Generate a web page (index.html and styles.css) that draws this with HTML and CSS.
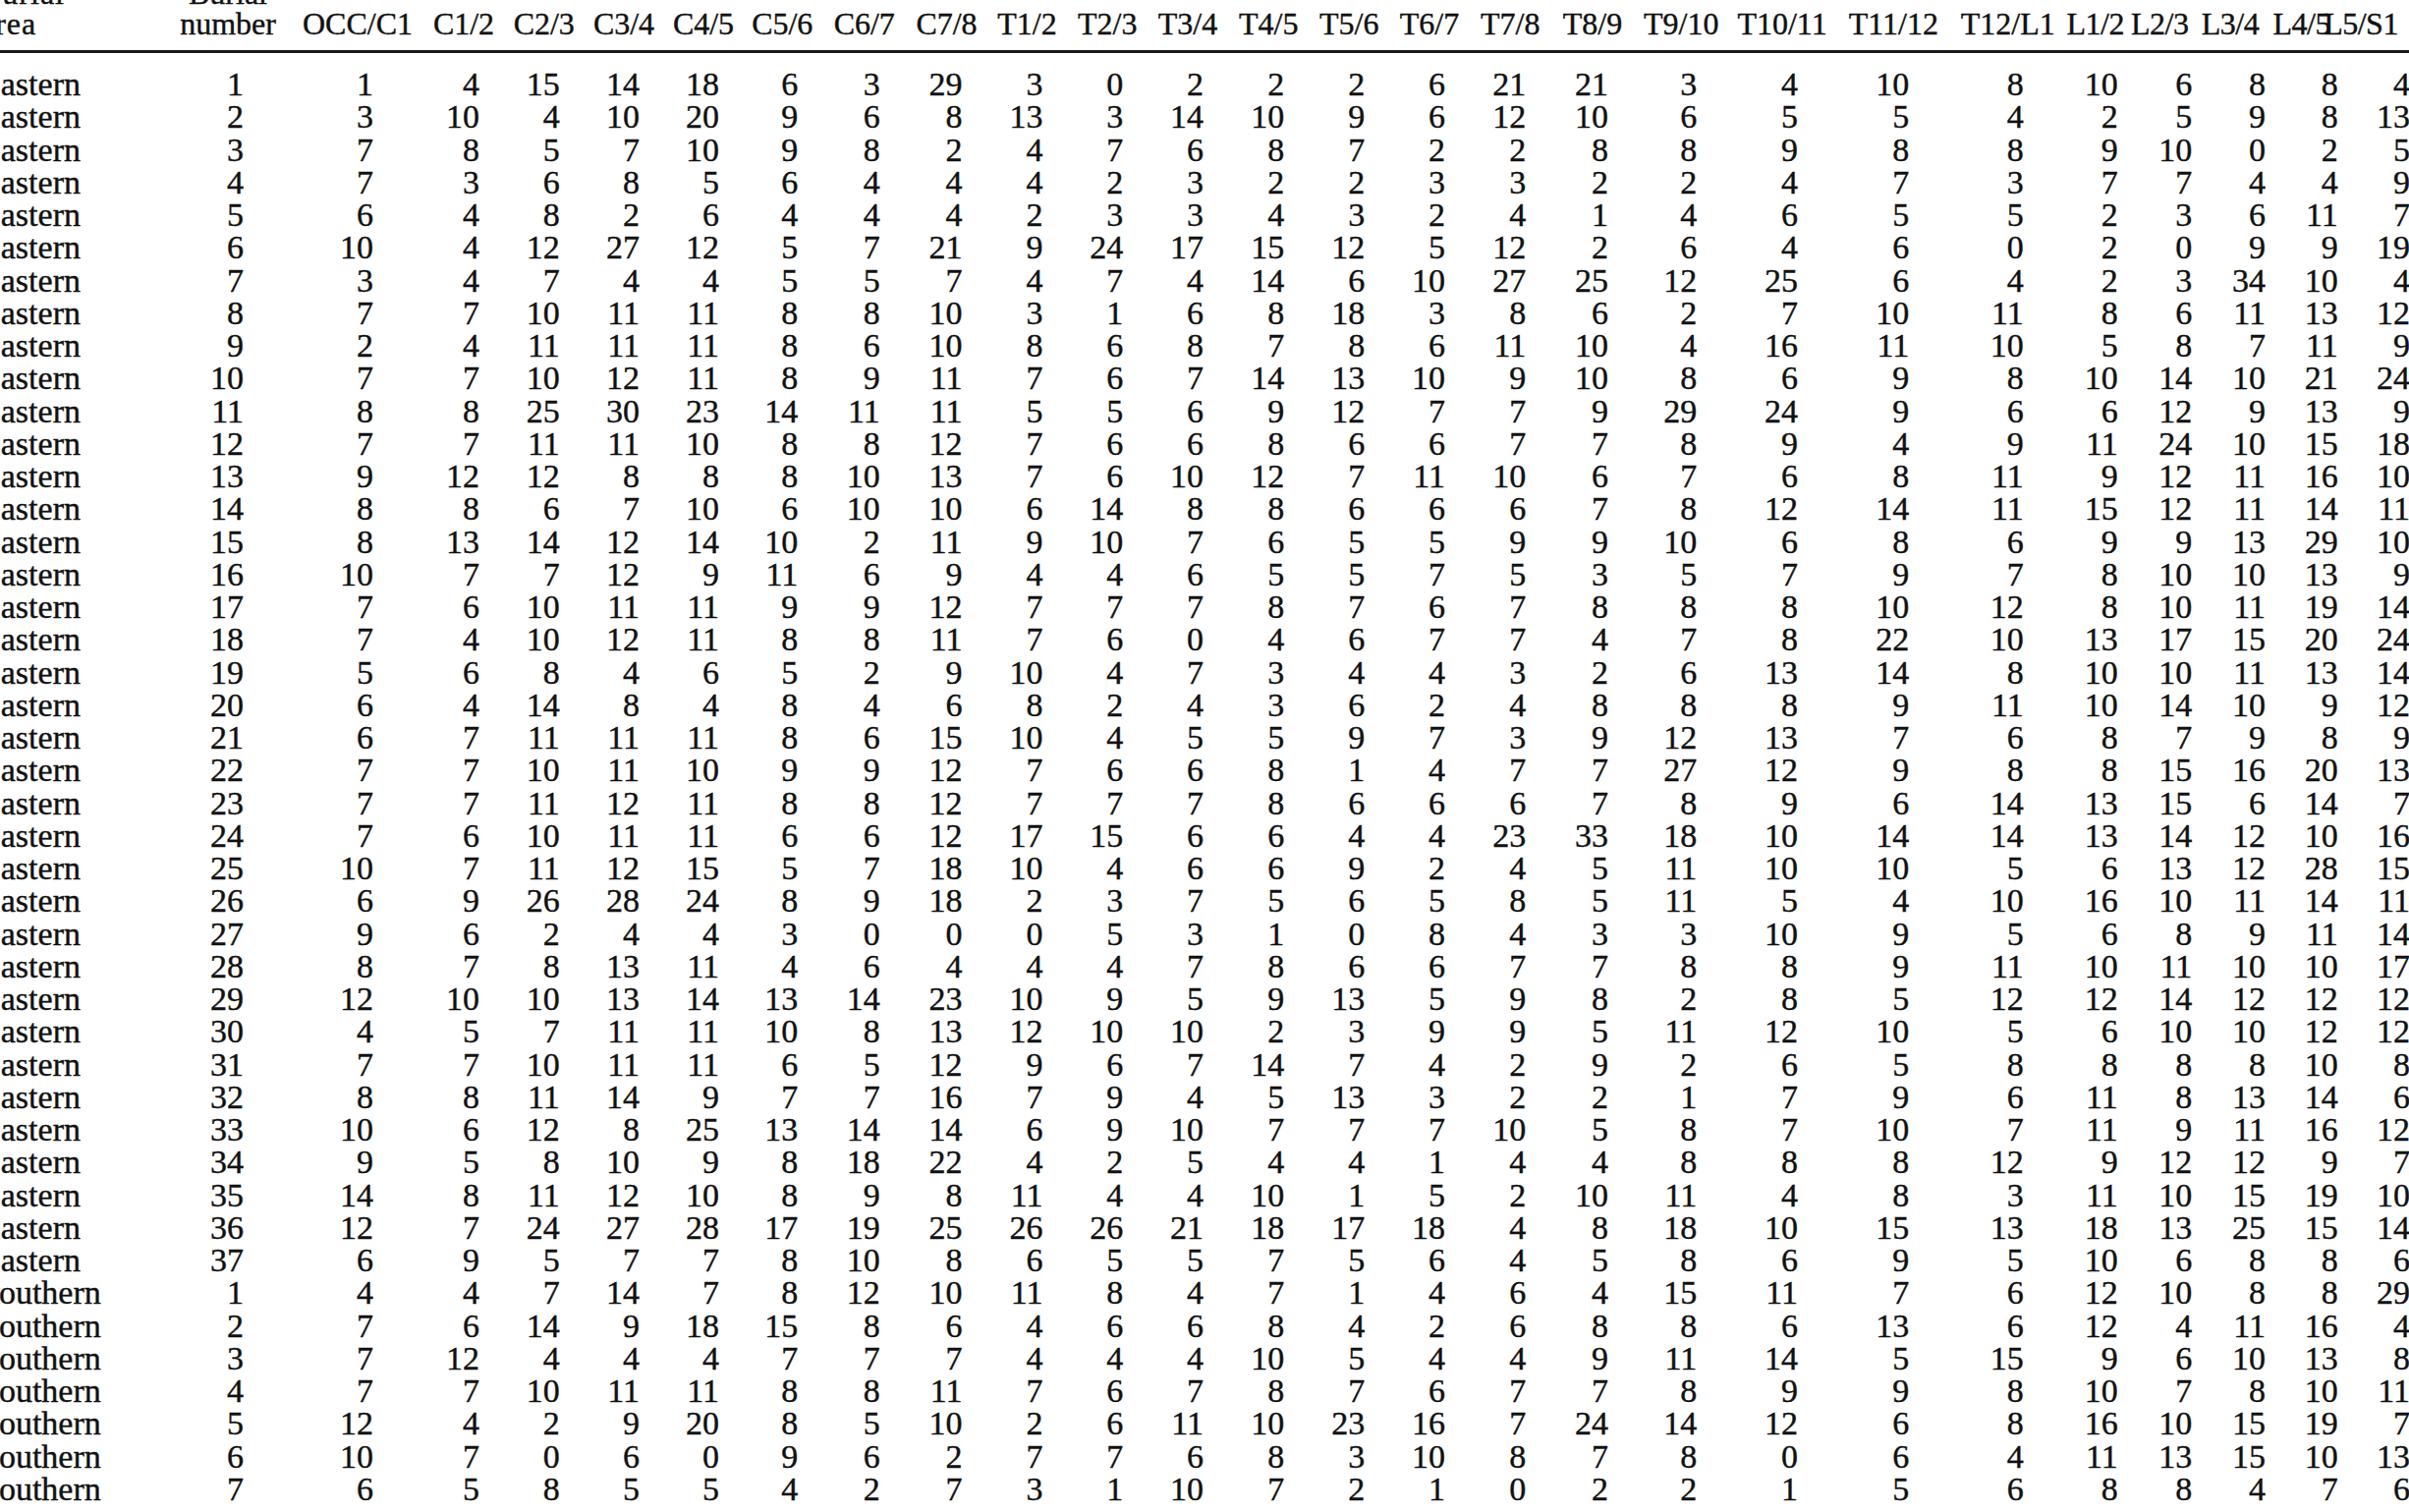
FILE: index.html
```html
<!DOCTYPE html>
<html lang="en">
<head>
<meta charset="utf-8">
<title>Burial vertebral data</title>
<link rel="stylesheet" href="styles.css">
</head>
<body>
<table class="tbl">
<thead>
<tr><th><div class="h h-left">Burial<br>area</div></th><th><div class="h">Burial<br>number</div></th><th><div class="h">OCC/C1</div></th><th><div class="h">C1/2</div></th><th><div class="h">C2/3</div></th><th><div class="h">C3/4</div></th><th><div class="h">C4/5</div></th><th><div class="h">C5/6</div></th><th><div class="h">C6/7</div></th><th><div class="h">C7/8</div></th><th><div class="h">T1/2</div></th><th><div class="h">T2/3</div></th><th><div class="h">T3/4</div></th><th><div class="h">T4/5</div></th><th><div class="h">T5/6</div></th><th><div class="h">T6/7</div></th><th><div class="h">T7/8</div></th><th><div class="h">T8/9</div></th><th><div class="h">T9/10</div></th><th><div class="h">T10/11</div></th><th><div class="h">T11/12</div></th><th><div class="h">T12/L1</div></th><th><div class="h">L1/2</div></th><th><div class="h">L2/3</div></th><th><div class="h">L3/4</div></th><th><div class="h">L4/5</div></th><th><div class="h">L5/S1</div></th></tr>
</thead>
<tbody>
<tr><td>Eastern</td><td>1</td><td>1</td><td>4</td><td>15</td><td>14</td><td>18</td><td>6</td><td>3</td><td>29</td><td>3</td><td>0</td><td>2</td><td>2</td><td>2</td><td>6</td><td>21</td><td>21</td><td>3</td><td>4</td><td>10</td><td>8</td><td>10</td><td>6</td><td>8</td><td>8</td><td>4</td></tr>
<tr><td>Eastern</td><td>2</td><td>3</td><td>10</td><td>4</td><td>10</td><td>20</td><td>9</td><td>6</td><td>8</td><td>13</td><td>3</td><td>14</td><td>10</td><td>9</td><td>6</td><td>12</td><td>10</td><td>6</td><td>5</td><td>5</td><td>4</td><td>2</td><td>5</td><td>9</td><td>8</td><td>13</td></tr>
<tr><td>Eastern</td><td>3</td><td>7</td><td>8</td><td>5</td><td>7</td><td>10</td><td>9</td><td>8</td><td>2</td><td>4</td><td>7</td><td>6</td><td>8</td><td>7</td><td>2</td><td>2</td><td>8</td><td>8</td><td>9</td><td>8</td><td>8</td><td>9</td><td>10</td><td>0</td><td>2</td><td>5</td></tr>
<tr><td>Eastern</td><td>4</td><td>7</td><td>3</td><td>6</td><td>8</td><td>5</td><td>6</td><td>4</td><td>4</td><td>4</td><td>2</td><td>3</td><td>2</td><td>2</td><td>3</td><td>3</td><td>2</td><td>2</td><td>4</td><td>7</td><td>3</td><td>7</td><td>7</td><td>4</td><td>4</td><td>9</td></tr>
<tr><td>Eastern</td><td>5</td><td>6</td><td>4</td><td>8</td><td>2</td><td>6</td><td>4</td><td>4</td><td>4</td><td>2</td><td>3</td><td>3</td><td>4</td><td>3</td><td>2</td><td>4</td><td>1</td><td>4</td><td>6</td><td>5</td><td>5</td><td>2</td><td>3</td><td>6</td><td>11</td><td>7</td></tr>
<tr><td>Eastern</td><td>6</td><td>10</td><td>4</td><td>12</td><td>27</td><td>12</td><td>5</td><td>7</td><td>21</td><td>9</td><td>24</td><td>17</td><td>15</td><td>12</td><td>5</td><td>12</td><td>2</td><td>6</td><td>4</td><td>6</td><td>0</td><td>2</td><td>0</td><td>9</td><td>9</td><td>19</td></tr>
<tr><td>Eastern</td><td>7</td><td>3</td><td>4</td><td>7</td><td>4</td><td>4</td><td>5</td><td>5</td><td>7</td><td>4</td><td>7</td><td>4</td><td>14</td><td>6</td><td>10</td><td>27</td><td>25</td><td>12</td><td>25</td><td>6</td><td>4</td><td>2</td><td>3</td><td>34</td><td>10</td><td>4</td></tr>
<tr><td>Eastern</td><td>8</td><td>7</td><td>7</td><td>10</td><td>11</td><td>11</td><td>8</td><td>8</td><td>10</td><td>3</td><td>1</td><td>6</td><td>8</td><td>18</td><td>3</td><td>8</td><td>6</td><td>2</td><td>7</td><td>10</td><td>11</td><td>8</td><td>6</td><td>11</td><td>13</td><td>12</td></tr>
<tr><td>Eastern</td><td>9</td><td>2</td><td>4</td><td>11</td><td>11</td><td>11</td><td>8</td><td>6</td><td>10</td><td>8</td><td>6</td><td>8</td><td>7</td><td>8</td><td>6</td><td>11</td><td>10</td><td>4</td><td>16</td><td>11</td><td>10</td><td>5</td><td>8</td><td>7</td><td>11</td><td>9</td></tr>
<tr><td>Eastern</td><td>10</td><td>7</td><td>7</td><td>10</td><td>12</td><td>11</td><td>8</td><td>9</td><td>11</td><td>7</td><td>6</td><td>7</td><td>14</td><td>13</td><td>10</td><td>9</td><td>10</td><td>8</td><td>6</td><td>9</td><td>8</td><td>10</td><td>14</td><td>10</td><td>21</td><td>24</td></tr>
<tr><td>Eastern</td><td>11</td><td>8</td><td>8</td><td>25</td><td>30</td><td>23</td><td>14</td><td>11</td><td>11</td><td>5</td><td>5</td><td>6</td><td>9</td><td>12</td><td>7</td><td>7</td><td>9</td><td>29</td><td>24</td><td>9</td><td>6</td><td>6</td><td>12</td><td>9</td><td>13</td><td>9</td></tr>
<tr><td>Eastern</td><td>12</td><td>7</td><td>7</td><td>11</td><td>11</td><td>10</td><td>8</td><td>8</td><td>12</td><td>7</td><td>6</td><td>6</td><td>8</td><td>6</td><td>6</td><td>7</td><td>7</td><td>8</td><td>9</td><td>4</td><td>9</td><td>11</td><td>24</td><td>10</td><td>15</td><td>18</td></tr>
<tr><td>Eastern</td><td>13</td><td>9</td><td>12</td><td>12</td><td>8</td><td>8</td><td>8</td><td>10</td><td>13</td><td>7</td><td>6</td><td>10</td><td>12</td><td>7</td><td>11</td><td>10</td><td>6</td><td>7</td><td>6</td><td>8</td><td>11</td><td>9</td><td>12</td><td>11</td><td>16</td><td>10</td></tr>
<tr><td>Eastern</td><td>14</td><td>8</td><td>8</td><td>6</td><td>7</td><td>10</td><td>6</td><td>10</td><td>10</td><td>6</td><td>14</td><td>8</td><td>8</td><td>6</td><td>6</td><td>6</td><td>7</td><td>8</td><td>12</td><td>14</td><td>11</td><td>15</td><td>12</td><td>11</td><td>14</td><td>11</td></tr>
<tr><td>Eastern</td><td>15</td><td>8</td><td>13</td><td>14</td><td>12</td><td>14</td><td>10</td><td>2</td><td>11</td><td>9</td><td>10</td><td>7</td><td>6</td><td>5</td><td>5</td><td>9</td><td>9</td><td>10</td><td>6</td><td>8</td><td>6</td><td>9</td><td>9</td><td>13</td><td>29</td><td>10</td></tr>
<tr><td>Eastern</td><td>16</td><td>10</td><td>7</td><td>7</td><td>12</td><td>9</td><td>11</td><td>6</td><td>9</td><td>4</td><td>4</td><td>6</td><td>5</td><td>5</td><td>7</td><td>5</td><td>3</td><td>5</td><td>7</td><td>9</td><td>7</td><td>8</td><td>10</td><td>10</td><td>13</td><td>9</td></tr>
<tr><td>Eastern</td><td>17</td><td>7</td><td>6</td><td>10</td><td>11</td><td>11</td><td>9</td><td>9</td><td>12</td><td>7</td><td>7</td><td>7</td><td>8</td><td>7</td><td>6</td><td>7</td><td>8</td><td>8</td><td>8</td><td>10</td><td>12</td><td>8</td><td>10</td><td>11</td><td>19</td><td>14</td></tr>
<tr><td>Eastern</td><td>18</td><td>7</td><td>4</td><td>10</td><td>12</td><td>11</td><td>8</td><td>8</td><td>11</td><td>7</td><td>6</td><td>0</td><td>4</td><td>6</td><td>7</td><td>7</td><td>4</td><td>7</td><td>8</td><td>22</td><td>10</td><td>13</td><td>17</td><td>15</td><td>20</td><td>24</td></tr>
<tr><td>Eastern</td><td>19</td><td>5</td><td>6</td><td>8</td><td>4</td><td>6</td><td>5</td><td>2</td><td>9</td><td>10</td><td>4</td><td>7</td><td>3</td><td>4</td><td>4</td><td>3</td><td>2</td><td>6</td><td>13</td><td>14</td><td>8</td><td>10</td><td>10</td><td>11</td><td>13</td><td>14</td></tr>
<tr><td>Eastern</td><td>20</td><td>6</td><td>4</td><td>14</td><td>8</td><td>4</td><td>8</td><td>4</td><td>6</td><td>8</td><td>2</td><td>4</td><td>3</td><td>6</td><td>2</td><td>4</td><td>8</td><td>8</td><td>8</td><td>9</td><td>11</td><td>10</td><td>14</td><td>10</td><td>9</td><td>12</td></tr>
<tr><td>Eastern</td><td>21</td><td>6</td><td>7</td><td>11</td><td>11</td><td>11</td><td>8</td><td>6</td><td>15</td><td>10</td><td>4</td><td>5</td><td>5</td><td>9</td><td>7</td><td>3</td><td>9</td><td>12</td><td>13</td><td>7</td><td>6</td><td>8</td><td>7</td><td>9</td><td>8</td><td>9</td></tr>
<tr><td>Eastern</td><td>22</td><td>7</td><td>7</td><td>10</td><td>11</td><td>10</td><td>9</td><td>9</td><td>12</td><td>7</td><td>6</td><td>6</td><td>8</td><td>1</td><td>4</td><td>7</td><td>7</td><td>27</td><td>12</td><td>9</td><td>8</td><td>8</td><td>15</td><td>16</td><td>20</td><td>13</td></tr>
<tr><td>Eastern</td><td>23</td><td>7</td><td>7</td><td>11</td><td>12</td><td>11</td><td>8</td><td>8</td><td>12</td><td>7</td><td>7</td><td>7</td><td>8</td><td>6</td><td>6</td><td>6</td><td>7</td><td>8</td><td>9</td><td>6</td><td>14</td><td>13</td><td>15</td><td>6</td><td>14</td><td>7</td></tr>
<tr><td>Eastern</td><td>24</td><td>7</td><td>6</td><td>10</td><td>11</td><td>11</td><td>6</td><td>6</td><td>12</td><td>17</td><td>15</td><td>6</td><td>6</td><td>4</td><td>4</td><td>23</td><td>33</td><td>18</td><td>10</td><td>14</td><td>14</td><td>13</td><td>14</td><td>12</td><td>10</td><td>16</td></tr>
<tr><td>Eastern</td><td>25</td><td>10</td><td>7</td><td>11</td><td>12</td><td>15</td><td>5</td><td>7</td><td>18</td><td>10</td><td>4</td><td>6</td><td>6</td><td>9</td><td>2</td><td>4</td><td>5</td><td>11</td><td>10</td><td>10</td><td>5</td><td>6</td><td>13</td><td>12</td><td>28</td><td>15</td></tr>
<tr><td>Eastern</td><td>26</td><td>6</td><td>9</td><td>26</td><td>28</td><td>24</td><td>8</td><td>9</td><td>18</td><td>2</td><td>3</td><td>7</td><td>5</td><td>6</td><td>5</td><td>8</td><td>5</td><td>11</td><td>5</td><td>4</td><td>10</td><td>16</td><td>10</td><td>11</td><td>14</td><td>11</td></tr>
<tr><td>Eastern</td><td>27</td><td>9</td><td>6</td><td>2</td><td>4</td><td>4</td><td>3</td><td>0</td><td>0</td><td>0</td><td>5</td><td>3</td><td>1</td><td>0</td><td>8</td><td>4</td><td>3</td><td>3</td><td>10</td><td>9</td><td>5</td><td>6</td><td>8</td><td>9</td><td>11</td><td>14</td></tr>
<tr><td>Eastern</td><td>28</td><td>8</td><td>7</td><td>8</td><td>13</td><td>11</td><td>4</td><td>6</td><td>4</td><td>4</td><td>4</td><td>7</td><td>8</td><td>6</td><td>6</td><td>7</td><td>7</td><td>8</td><td>8</td><td>9</td><td>11</td><td>10</td><td>11</td><td>10</td><td>10</td><td>17</td></tr>
<tr><td>Eastern</td><td>29</td><td>12</td><td>10</td><td>10</td><td>13</td><td>14</td><td>13</td><td>14</td><td>23</td><td>10</td><td>9</td><td>5</td><td>9</td><td>13</td><td>5</td><td>9</td><td>8</td><td>2</td><td>8</td><td>5</td><td>12</td><td>12</td><td>14</td><td>12</td><td>12</td><td>12</td></tr>
<tr><td>Eastern</td><td>30</td><td>4</td><td>5</td><td>7</td><td>11</td><td>11</td><td>10</td><td>8</td><td>13</td><td>12</td><td>10</td><td>10</td><td>2</td><td>3</td><td>9</td><td>9</td><td>5</td><td>11</td><td>12</td><td>10</td><td>5</td><td>6</td><td>10</td><td>10</td><td>12</td><td>12</td></tr>
<tr><td>Eastern</td><td>31</td><td>7</td><td>7</td><td>10</td><td>11</td><td>11</td><td>6</td><td>5</td><td>12</td><td>9</td><td>6</td><td>7</td><td>14</td><td>7</td><td>4</td><td>2</td><td>9</td><td>2</td><td>6</td><td>5</td><td>8</td><td>8</td><td>8</td><td>8</td><td>10</td><td>8</td></tr>
<tr><td>Eastern</td><td>32</td><td>8</td><td>8</td><td>11</td><td>14</td><td>9</td><td>7</td><td>7</td><td>16</td><td>7</td><td>9</td><td>4</td><td>5</td><td>13</td><td>3</td><td>2</td><td>2</td><td>1</td><td>7</td><td>9</td><td>6</td><td>11</td><td>8</td><td>13</td><td>14</td><td>6</td></tr>
<tr><td>Eastern</td><td>33</td><td>10</td><td>6</td><td>12</td><td>8</td><td>25</td><td>13</td><td>14</td><td>14</td><td>6</td><td>9</td><td>10</td><td>7</td><td>7</td><td>7</td><td>10</td><td>5</td><td>8</td><td>7</td><td>10</td><td>7</td><td>11</td><td>9</td><td>11</td><td>16</td><td>12</td></tr>
<tr><td>Eastern</td><td>34</td><td>9</td><td>5</td><td>8</td><td>10</td><td>9</td><td>8</td><td>18</td><td>22</td><td>4</td><td>2</td><td>5</td><td>4</td><td>4</td><td>1</td><td>4</td><td>4</td><td>8</td><td>8</td><td>8</td><td>12</td><td>9</td><td>12</td><td>12</td><td>9</td><td>7</td></tr>
<tr><td>Eastern</td><td>35</td><td>14</td><td>8</td><td>11</td><td>12</td><td>10</td><td>8</td><td>9</td><td>8</td><td>11</td><td>4</td><td>4</td><td>10</td><td>1</td><td>5</td><td>2</td><td>10</td><td>11</td><td>4</td><td>8</td><td>3</td><td>11</td><td>10</td><td>15</td><td>19</td><td>10</td></tr>
<tr><td>Eastern</td><td>36</td><td>12</td><td>7</td><td>24</td><td>27</td><td>28</td><td>17</td><td>19</td><td>25</td><td>26</td><td>26</td><td>21</td><td>18</td><td>17</td><td>18</td><td>4</td><td>8</td><td>18</td><td>10</td><td>15</td><td>13</td><td>18</td><td>13</td><td>25</td><td>15</td><td>14</td></tr>
<tr><td>Eastern</td><td>37</td><td>6</td><td>9</td><td>5</td><td>7</td><td>7</td><td>8</td><td>10</td><td>8</td><td>6</td><td>5</td><td>5</td><td>7</td><td>5</td><td>6</td><td>4</td><td>5</td><td>8</td><td>6</td><td>9</td><td>5</td><td>10</td><td>6</td><td>8</td><td>8</td><td>6</td></tr>
<tr><td>Southern</td><td>1</td><td>4</td><td>4</td><td>7</td><td>14</td><td>7</td><td>8</td><td>12</td><td>10</td><td>11</td><td>8</td><td>4</td><td>7</td><td>1</td><td>4</td><td>6</td><td>4</td><td>15</td><td>11</td><td>7</td><td>6</td><td>12</td><td>10</td><td>8</td><td>8</td><td>29</td></tr>
<tr><td>Southern</td><td>2</td><td>7</td><td>6</td><td>14</td><td>9</td><td>18</td><td>15</td><td>8</td><td>6</td><td>4</td><td>6</td><td>6</td><td>8</td><td>4</td><td>2</td><td>6</td><td>8</td><td>8</td><td>6</td><td>13</td><td>6</td><td>12</td><td>4</td><td>11</td><td>16</td><td>4</td></tr>
<tr><td>Southern</td><td>3</td><td>7</td><td>12</td><td>4</td><td>4</td><td>4</td><td>7</td><td>7</td><td>7</td><td>4</td><td>4</td><td>4</td><td>10</td><td>5</td><td>4</td><td>4</td><td>9</td><td>11</td><td>14</td><td>5</td><td>15</td><td>9</td><td>6</td><td>10</td><td>13</td><td>8</td></tr>
<tr><td>Southern</td><td>4</td><td>7</td><td>7</td><td>10</td><td>11</td><td>11</td><td>8</td><td>8</td><td>11</td><td>7</td><td>6</td><td>7</td><td>8</td><td>7</td><td>6</td><td>7</td><td>7</td><td>8</td><td>9</td><td>9</td><td>8</td><td>10</td><td>7</td><td>8</td><td>10</td><td>11</td></tr>
<tr><td>Southern</td><td>5</td><td>12</td><td>4</td><td>2</td><td>9</td><td>20</td><td>8</td><td>5</td><td>10</td><td>2</td><td>6</td><td>11</td><td>10</td><td>23</td><td>16</td><td>7</td><td>24</td><td>14</td><td>12</td><td>6</td><td>8</td><td>16</td><td>10</td><td>15</td><td>19</td><td>7</td></tr>
<tr><td>Southern</td><td>6</td><td>10</td><td>7</td><td>0</td><td>6</td><td>0</td><td>9</td><td>6</td><td>2</td><td>7</td><td>7</td><td>6</td><td>8</td><td>3</td><td>10</td><td>8</td><td>7</td><td>8</td><td>0</td><td>6</td><td>4</td><td>11</td><td>13</td><td>15</td><td>10</td><td>13</td></tr>
<tr><td>Southern</td><td>7</td><td>6</td><td>5</td><td>8</td><td>5</td><td>5</td><td>4</td><td>2</td><td>7</td><td>3</td><td>1</td><td>10</td><td>7</td><td>2</td><td>1</td><td>0</td><td>2</td><td>2</td><td>1</td><td>5</td><td>6</td><td>8</td><td>8</td><td>4</td><td>7</td><td>6</td></tr>
</tbody>
</table>
</body>
</html>
```
FILE: styles.css
```css
html, body {
  margin: 0;
  padding: 0;
  background: #ffffff;
  overflow: hidden;
}

body {
  font-family: "Liberation Serif", "Times New Roman", "DejaVu Serif", serif;
  font-size: 32px;
  color: #111111;
  -webkit-text-stroke: 0.4px #111111;
}

/* The page is a crop of a wider printed table: it starts a little
   above and to the left of the visible area. */
.tbl {
  table-layout: fixed;
  width: 2493.5px;
  border-collapse: separate;
  border-spacing: 0;
  margin: -22px 0 0 -20px;
}

.tbl th {
  font-weight: normal;
  padding: 0 0 11px 0;
  line-height: 31px;
  vertical-align: bottom;
  white-space: nowrap;
  border-bottom: 3px solid #1a1a1a;
}

.h {
  display: flex;
  justify-content: center;
  text-align: center;
}

.h-left {
  justify-content: flex-start;
  text-align: left;
  letter-spacing: 1px;
}

.tbl td {
  padding: 0;
  font-size: 34px;
  line-height: 33.25px;
  text-align: right;
  white-space: nowrap;
}

.tbl tbody tr:first-child td {
  padding-top: 15px;
}

.tbl td:first-child {
  text-align: left;
}

/* column widths */
.tbl th:nth-child(1)  { width: 186px; }
.tbl th:nth-child(2)  { width: 132px; }
.tbl th:nth-child(3)  { width: 132px; }
.tbl th:nth-child(4)  { width: 84px; }
.tbl th:nth-child(5)  { width: 79.5px; }
.tbl th:nth-child(6)  { width: 83px; }
.tbl th:nth-child(7)  { width: 79px; }
.tbl th:nth-child(8)  { width: 81.5px; }
.tbl th:nth-child(9)  { width: 85.5px; }
.tbl th:nth-child(10) { width: 82px; }
.tbl th:nth-child(11) { width: 82px; }
.tbl th:nth-child(12) { width: 81.5px; }
.tbl th:nth-child(13) { width: 82px; }
.tbl th:nth-child(14) { width: 82.5px; }
.tbl th:nth-child(15) { width: 81.5px; }
.tbl th:nth-child(16) { width: 82px; }
.tbl th:nth-child(17) { width: 82.5px; }
.tbl th:nth-child(18) { width: 85px; }
.tbl th:nth-child(19) { width: 95.5px; }
.tbl th:nth-child(20) { width: 110px; }
.tbl th:nth-child(21) { width: 116.5px; }
.tbl th:nth-child(22) { width: 116.5px; }
.tbl th:nth-child(23) { width: 75.5px; }
.tbl th:nth-child(24) { width: 75.5px; }
.tbl th:nth-child(25) { width: 74px; }
.tbl th:nth-child(26) { width: 73.5px; }
.tbl th:nth-child(27) { width: 73px; }

/* squeezed headers at the right-hand end sit left of their figures */
.tbl th:nth-child(n+23) .h { letter-spacing: -0.5px; }
.tbl th:nth-child(23) .h { margin-right: 14px; }
.tbl th:nth-child(24) .h { margin-right: 34px; }
.tbl th:nth-child(25) .h { margin-right: 40px; }
.tbl th:nth-child(26) .h { margin-right: 42px; }
.tbl th:nth-child(27) .h { margin-right: 68px; }

/* figures: right-aligned in a two-digit block centred under the heading */
.tbl td:nth-child(2)  { padding-right: 50px; }
.tbl td:nth-child(3)  { padding-right: 50px; }
.tbl td:nth-child(4)  { padding-right: 26px; }
.tbl td:nth-child(5)  { padding-right: 23.75px; }
.tbl td:nth-child(6)  { padding-right: 25.5px; }
.tbl td:nth-child(7)  { padding-right: 23.5px; }
.tbl td:nth-child(8)  { padding-right: 24.75px; }
.tbl td:nth-child(9)  { padding-right: 26.75px; }
.tbl td:nth-child(10) { padding-right: 25px; }
.tbl td:nth-child(11) { padding-right: 25px; }
.tbl td:nth-child(12) { padding-right: 24.75px; }
.tbl td:nth-child(13) { padding-right: 25px; }
.tbl td:nth-child(14) { padding-right: 25.25px; }
.tbl td:nth-child(15) { padding-right: 24.75px; }
.tbl td:nth-child(16) { padding-right: 25px; }
.tbl td:nth-child(17) { padding-right: 25.25px; }
.tbl td:nth-child(18) { padding-right: 26.5px; }
.tbl td:nth-child(19) { padding-right: 31.75px; }
.tbl td:nth-child(20) { padding-right: 39px; }
.tbl td:nth-child(21) { padding-right: 42.25px; }
.tbl td:nth-child(22) { padding-right: 42.25px; }
.tbl td:nth-child(23) { padding-right: 21.75px; }
.tbl td:nth-child(24) { padding-right: 21.75px; }
.tbl td:nth-child(25) { padding-right: 21px; }
.tbl td:nth-child(26) { padding-right: 20.75px; }
.tbl td:nth-child(27) { padding-right: 20.5px; }
```
